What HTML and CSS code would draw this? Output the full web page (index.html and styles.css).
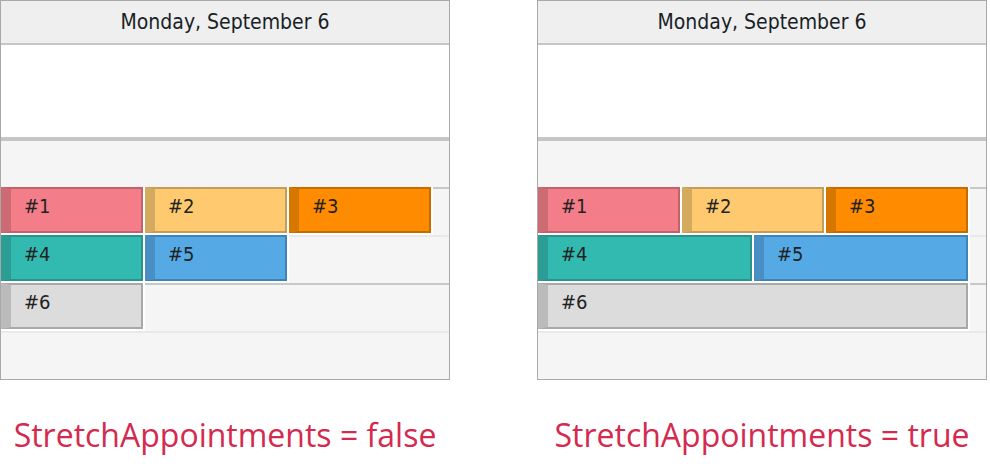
FILE: index.html
```html
<!DOCTYPE html>
<html lang="en">
<head>
<meta charset="utf-8">
<title>StretchAppointments</title>
<link rel="stylesheet" href="styles.css">
</head>
<body>
<div class="demo">
  <div class="example">
    <div class="scheduler">
      <div class="day-header">Monday, September 6</div>
      <div class="all-day"></div>
      <div class="slots">
        <div class="slot slot-major"></div>
        <div class="slot slot-minor"></div>
        <div class="slot slot-major"></div>
        <div class="slot slot-minor"></div>
        <div class="slot slot-last"></div>
        <div class="appts">
          <div class="cell span2"><div class="appt red">#1</div></div>
          <div class="cell span2"><div class="appt yellow">#2</div></div>
          <div class="cell span2"><div class="appt orange">#3</div></div>
          <div class="cell span2 new-row"><div class="appt teal">#4</div></div>
          <div class="cell span2"><div class="appt blue">#5</div></div>
          <div class="cell span2 new-row"><div class="appt gray">#6</div></div>
        </div>
      </div>
    </div>
    <div class="caption">StretchAppointments = false</div>
  </div>
  <div class="example">
    <div class="scheduler">
      <div class="day-header">Monday, September 6</div>
      <div class="all-day"></div>
      <div class="slots">
        <div class="slot slot-major"></div>
        <div class="slot slot-minor"></div>
        <div class="slot slot-major"></div>
        <div class="slot slot-minor"></div>
        <div class="slot slot-last"></div>
        <div class="appts">
          <div class="cell span2"><div class="appt red">#1</div></div>
          <div class="cell span2"><div class="appt yellow">#2</div></div>
          <div class="cell span2"><div class="appt orange">#3</div></div>
          <div class="cell span3 new-row"><div class="appt teal">#4</div></div>
          <div class="cell span3"><div class="appt blue">#5</div></div>
          <div class="cell span6 new-row"><div class="appt gray">#6</div></div>
        </div>
      </div>
    </div>
    <div class="caption">StretchAppointments = true</div>
  </div>
</div>
</body>
</html>
```

FILE: styles.css
```css
html, body {
  margin: 0;
  padding: 0;
  background: #ffffff;
}

.demo {
  display: flex;
  gap: 87px;
}

.example {
  width: 450px;
  display: flex;
  flex-direction: column;
}

.scheduler {
  box-sizing: border-box;
  width: 450px;
  border: 1px solid #a9a9a9;
  font-family: "DejaVu Sans Condensed", "DejaVu Sans", sans-serif;
  font-stretch: condensed;
  color: #1a1f26;
}

.day-header {
  height: 42px;
  line-height: 42px;
  background: #efefef;
  border-bottom: 2px solid #c6c6c6;
  text-align: center;
  font-size: 21px;
}

.all-day {
  height: 92px;
  background: #ffffff;
  border-bottom: 4px solid #c6c6c6;
}

.slots {
  position: relative;
  background: #f5f5f5;
}

.slot {
  height: 46px;
}

.slot-major {
  border-bottom: 2px solid #c8c8c8;
}

.slot-minor {
  border-bottom: 2px solid #e9e9e9;
}

.appts {
  position: absolute;
  top: 46px;
  left: 0;
  width: 432px;
  display: grid;
  grid-template-columns: repeat(6, 72px);
  grid-auto-rows: 48px;
}

.cell {
  box-sizing: border-box;
  padding: 0 2px 2px 0;
  background: #ffffff;
}

.span2 { grid-column-end: span 2; }
.span3 { grid-column-end: span 3; }
.span6 { grid-column-end: span 6; }
.new-row { grid-column-start: 1; }

.appt {
  box-sizing: border-box;
  height: 46px;
  border: 2px solid;
  border-left-width: 10px;
  padding: 5px 0 0 13px;
  font-size: 20px;
  line-height: 24px;
  color: #222222;
}

.red    { background: #f37e8a; border-color: #c1626c; border-left-color: #cd6b75; }
.yellow { background: #ffca6f; border-color: #c49c5c; border-left-color: #d4aa5f; }
.orange { background: #ff8c00; border-color: #c46c00; border-left-color: #d67700; }
.teal   { background: #33bab0; border-color: #29948c; border-left-color: #2c9d95; }
.blue   { background: #55aae5; border-color: #3e84b6; border-left-color: #4a8fc3; }
.gray   { background: #dcdcdc; border-color: #a8a8a8; border-left-color: #bbbbbb; }

.caption {
  margin-top: 35px;
  text-align: center;
  font-family: "Open Sans", sans-serif;
  font-size: 32px;
  line-height: 40px;
  color: #d42a4f;
}
```
